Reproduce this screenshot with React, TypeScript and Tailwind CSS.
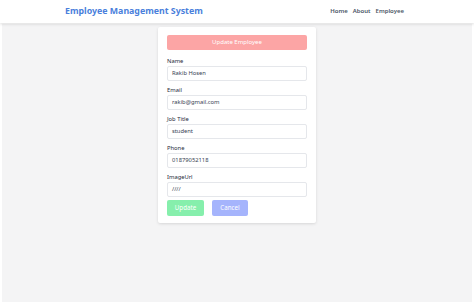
import React from "react";

const fields = [
  { label: "Name", value: "Rakib Hosen" },
  { label: "Email", value: "rakib@gmail.com" },
  { label: "Job Title", value: "student" },
  { label: "Phone", value: "01879052118" },
  { label: "ImageUrl", value: "////" },
];

export default function App() {
  return (
    <div className="h-[305px] w-[474px] bg-white font-['Noto_Sans',sans-serif]">
      {/* Header */}
      <header className="relative z-10 flex h-[23px] items-center justify-between bg-white pl-[65px] pr-[70px] shadow-[0_1px_3px_rgba(0,0,0,0.15)]">
        <h1 className="text-[8.8px] font-bold leading-none text-[#4a7fdc]">Employee Management System</h1>
        <nav className="flex gap-[5px] text-[6px] font-semibold text-gray-600">
          <a>Home</a>
          <a>About</a>
          <a>Employee</a>
        </nav>
      </header>

      {/* Body */}
      <main className="mx-[2px] mt-px flex h-[278px] justify-center bg-[#f4f4f5] pt-[3px]">
        <div className="h-[196px] w-[158px] rounded-[2px] bg-white px-[9px] pt-[8px] shadow-[0_1px_3px_rgba(0,0,0,0.12)]">
          <div className="flex h-[15px] items-center justify-center rounded-[2px] bg-[#fca5a5] text-[6px] text-white">
            Update Employee
          </div>
          <div className="mt-[7px] flex flex-col gap-[5px]">
            {fields.map((f) => (
              <div key={f.label} className="flex flex-col">
                <label className="h-[9px] text-[5.8px] leading-[8px] text-gray-800">{f.label}</label>
                <div className="flex h-[15px] items-center rounded-[2px] border border-gray-200 px-[4px] text-[5.8px] text-gray-700">
                  {f.value}
                </div>
              </div>
            ))}
          </div>
          <div className="mt-[3px] flex gap-[8px]">
            <div className="flex h-[16px] w-[37px] items-center justify-center rounded-[2px] bg-[#86efac] text-[6.2px] text-white">
              Update
            </div>
            <div className="flex h-[16px] w-[36px] items-center justify-center rounded-[2px] bg-[#a5b4fc] text-[6.2px] text-white">
              Cancel
            </div>
          </div>
        </div>
      </main>
    </div>
  );
}
